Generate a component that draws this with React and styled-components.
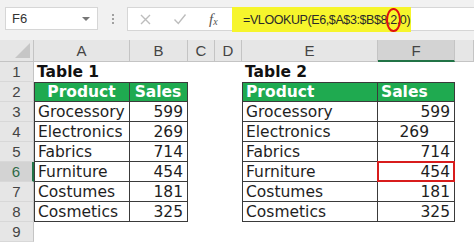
import React from "react";
import styled, { createGlobalStyle, css } from "styled-components";

const GlobalStyle = createGlobalStyle`
  body {
    margin: 0;
    background: #ffffff;
  }
`;

const COLS = [34, 96, 58, 27, 27, 136, 77, 19];
const GRID_COLS = COLS.map(w => `${w}px`).join(" ");
const GREEN = "#1faa50";
const LINE = "#3a3a3a";

const Page = styled.div`
  width: 474px;
  height: 245px;
  overflow: hidden;
  background: #ffffff;
  font-family: "DejaVu Sans", Verdana, sans-serif;
`;

const FormulaBar = styled.div`
  height: 40px;
  background: #f1f1f1;
  display: flex;
  align-items: flex-start;
  padding-top: 7px;
  box-sizing: border-box;
`;

const NameBox = styled.div`
  margin-left: 5px;
  width: 93px;
  height: 23px;
  background: #fff;
  border: 1px solid #d6d6d6;
  box-sizing: border-box;
  display: flex;
  align-items: center;
  justify-content: space-between;
  padding: 0 7px 0 6px;
  font-family: "Liberation Sans", Arial, sans-serif;
  font-size: 13px;
  color: #333;
`;

const Caret = styled.span`
  width: 0;
  height: 0;
  border-left: 4px solid transparent;
  border-right: 4px solid transparent;
  border-top: 4px solid #777;
`;

const Grip = styled.div`
  width: 29px;
  height: 23px;
  display: flex;
  flex-direction: column;
  align-items: center;
  justify-content: center;
  gap: 2px;
  span {
    width: 2px;
    height: 2px;
    background: #a0a0a0;
  }
`;

const FormulaBox = styled.div`
  flex: 1;
  height: 24px;
  background: #fff;
  border: 1px solid #d6d6d6;
  border-right: none;
  box-sizing: border-box;
  display: flex;
  align-items: stretch;
`;

const ToolIcons = styled.div`
  width: 104px;
  display: flex;
  align-items: center;
  padding-left: 11px;
  gap: 21px;
  color: #b8b8b8;
  box-sizing: border-box;
`;

const Fx = styled.span`
  font-family: "Liberation Serif", "Times New Roman", serif;
  font-style: italic;
  font-size: 15px;
  color: #555;
  margin-left: 1px;
  sub {
    font-size: 10px;
    vertical-align: -1px;
  }
`;

const Highlight = styled.div`
  width: 179px;
  margin: -1px 0 -2px;
  background: #f6f52c;
  display: flex;
  align-items: center;
  padding-left: 11px;
  box-sizing: border-box;
  font-family: "Liberation Sans", Arial, sans-serif;
  font-size: 12.5px;
  letter-spacing: -0.4px;
  color: #2a2a2a;
  white-space: nowrap;
`;

const Circled = styled.span`
  position: relative;
  &::after {
    content: "";
    position: absolute;
    left: -4px;
    right: -4px;
    top: -5px;
    bottom: -5px;
    border: 2px solid #e01010;
    border-radius: 50%;
  }
`;

const Sheet = styled.div`
  display: grid;
  grid-template-columns: ${GRID_COLS};
  grid-template-rows: 22px repeat(9, 20px);
`;

const Corner = styled.div`
  background: #e6e6e6;
  border-right: 1px solid #c4c4c4;
  border-bottom: 1px solid #c4c4c4;
  display: flex;
  align-items: flex-end;
  justify-content: flex-end;
  padding: 0 3px 3px 0;
  box-sizing: border-box;
`;

const Triangle = styled.span`
  width: 0;
  height: 0;
  border-left: 15px solid transparent;
  border-bottom: 15px solid #c6c6c6;
`;

const ColHead = styled.div`
  background: ${p => (p.$active ? "#d3d3d3" : "#e6e6e6")};
  border-right: 1px solid #c4c4c4;
  border-bottom: ${p => (p.$active ? `2px solid #217346` : "1px solid #c4c4c4")};
  box-sizing: border-box;
  display: flex;
  align-items: center;
  justify-content: center;
  font-family: "Liberation Sans", Arial, sans-serif;
  font-size: 15px;
  color: #444;
`;

const RowHead = styled.div`
  background: ${p => (p.$active ? "#d3d3d3" : "#e6e6e6")};
  border-right: ${p => (p.$active ? `2px solid #217346` : "1px solid #c4c4c4")};
  border-bottom: 1px solid #d8d8d8;
  box-sizing: border-box;
  display: flex;
  align-items: center;
  justify-content: center;
  font-family: "Liberation Sans", Arial, sans-serif;
  font-size: 15px;
  color: ${p => (p.$active ? "#2f6b47" : "#444")};
`;

const Cell = styled.div`
  position: relative;
  box-sizing: border-box;
  display: flex;
  align-items: center;
  justify-content: ${p => p.$align || "flex-start"};
  padding: 0 ${p => p.$pr ?? 4}px 0 3px;
  font-size: 15.5px;
  color: #1e1e1e;
  white-space: nowrap;
  ${p =>
    p.$title &&
    css`
      font-weight: bold;
      color: #111;
      overflow: visible;
    `}
  ${p =>
    p.$boxed &&
    css`
      border-right: 1.5px solid ${LINE};
      border-bottom: 1px solid ${LINE};
    `}
  ${p =>
    p.$left &&
    css`
      border-left: 1.5px solid ${LINE};
    `}
  ${p =>
    p.$last &&
    css`
      border-bottom: 1.5px solid ${LINE};
    `}
  ${p =>
    p.$head &&
    css`
      background: ${GREEN};
      color: #fff;
      font-weight: bold;
      border-top: 1.5px solid ${LINE};
    `}
`;

const Marker = styled.span`
  position: absolute;
  left: -1px;
  right: -1px;
  top: -1px;
  bottom: -1px;
  border: 2px solid #d81c1c;
`;

const Cross = () => (
  <svg width="13" height="13" viewBox="0 0 13 13">
    <path d="M2 2l9 9M11 2l-9 9" stroke="#bdbdbd" strokeWidth="1.4" fill="none" />
  </svg>
);

const Check = () => (
  <svg width="14" height="12" viewBox="0 0 14 12">
    <path d="M1.5 6.5l3.8 4L12.5 1.5" stroke="#bdbdbd" strokeWidth="1.4" fill="none" />
  </svg>
);

const table1 = [
  ["Grocessory", "599"],
  ["Electronics", "269"],
  ["Fabrics", "714"],
  ["Furniture", "454"],
  ["Costumes", "181"],
  ["Cosmetics", "325"],
];

const table2 = [
  ["Grocessory", "599"],
  ["Electronics", "269", 25],
  ["Fabrics", "714"],
  ["Furniture", "454", 4, true],
  ["Costumes", "181"],
  ["Cosmetics", "325"],
];

const letters = ["A", "B", "C", "D", "E", "F", "G"];

export default function App() {
  const rows = [];

  rows.push(
    <React.Fragment key="r1">
      <RowHead>1</RowHead>
      <Cell $title>Table 1</Cell>
      <Cell />
      <Cell />
      <Cell />
      <Cell $title>Table 2</Cell>
      <Cell />
      <Cell />
    </React.Fragment>
  );

  rows.push(
    <React.Fragment key="r2">
      <RowHead>2</RowHead>
      <Cell $boxed $left $head $align="center">Product</Cell>
      <Cell $boxed $head $align="center">Sales</Cell>
      <Cell />
      <Cell />
      <Cell $boxed $left $head>Product</Cell>
      <Cell $boxed $head>Sales</Cell>
      <Cell />
    </React.Fragment>
  );

  table1.forEach((r, i) => {
    const r2 = table2[i];
    const last = i === table1.length - 1;
    rows.push(
      <React.Fragment key={`d${i}`}>
        <RowHead $active={i === 3}>{i + 3}</RowHead>
        <Cell $boxed $left $last={last}>{r[0]}</Cell>
        <Cell $boxed $last={last} $align="flex-end">{r[1]}</Cell>
        <Cell />
        <Cell />
        <Cell $boxed $left $last={last}>{r2[0]}</Cell>
        <Cell $boxed $last={last} $align="flex-end" $pr={r2[2]}>
          {r2[1]}
          {r2[3] && <Marker />}
        </Cell>
        <Cell />
      </React.Fragment>
    );
  });

  rows.push(
    <React.Fragment key="r9">
      <RowHead>9</RowHead>
      {letters.map(l => (
        <Cell key={l} />
      ))}
    </React.Fragment>
  );

  return (
    <Page>
      <GlobalStyle />
      <FormulaBar>
        <NameBox>
          F6
          <Caret />
        </NameBox>
        <Grip>
          <span />
          <span />
          <span />
        </Grip>
        <FormulaBox>
          <ToolIcons>
            <Cross />
            <Check />
            <Fx>
              f<sub>x</sub>
            </Fx>
          </ToolIcons>
          <Highlight>
            =VLOOKUP(E6,$A$3:$B$8,<Circled>2</Circled>,0)
          </Highlight>
        </FormulaBox>
      </FormulaBar>
      <Sheet>
        <Corner>
          <Triangle />
        </Corner>
        {letters.map(l => (
          <ColHead key={l} $active={l === "F"}>
            {l === "G" ? "" : l}
          </ColHead>
        ))}
        {rows}
      </Sheet>
    </Page>
  );
}
